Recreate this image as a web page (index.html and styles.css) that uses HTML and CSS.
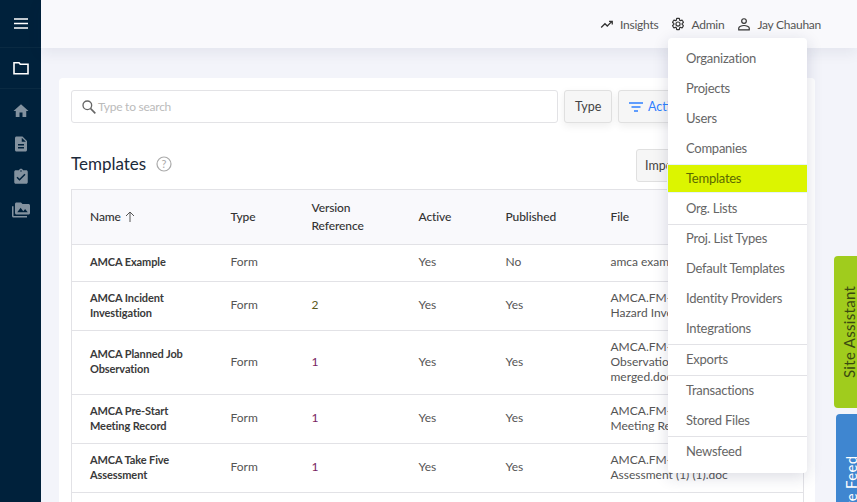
FILE: index.html
```html
<!DOCTYPE html>
<html lang="en">
<head>
<meta charset="utf-8">
<title>Templates</title>
<link rel="stylesheet" href="styles.css">
</head>
<body>
<div class="app">
  <aside class="sidebar">
    <div class="side-top">
      <svg viewBox="0 0 14 11" width="14" height="11"><path d="M0 1h14M0 5.500h14M0 10h14" stroke="#fff" stroke-width="1.500" fill="none"/></svg>
    </div>
    <div class="side-folder">
      <svg viewBox="0 0 16 14" width="16" height="14"><path d="M1 3V1.700h5l1.300 1.600H15v9.400H1z" fill="none" stroke="#fff" stroke-width="1.600"/></svg>
    </div>
    <nav class="side-nav">
      <svg viewBox="0 0 24 24" width="18" height="18"><path d="M10 20v-6h4v6h5v-8h3L12 3 2 12h3v8z" fill="#83929f"/></svg>
      <svg viewBox="0 0 24 24" width="18" height="18"><path d="M14 2H6c-1.100 0-2 .9-2 2v16c0 1.100.9 2 2 2h12c1.100 0 2-.9 2-2V8l-6-6zm2 16H8v-2h8v2zm0-4H8v-2h8v2zm-3-5V3.500L18.500 9H13z" fill="#83929f"/></svg>
      <svg viewBox="0 0 24 24" width="18" height="18"><path d="M19 3h-4.200C14.400 1.800 13.300 1 12 1s-2.400.8-2.800 2H5c-1.100 0-2 .9-2 2v14c0 1.100.9 2 2 2h14c1.100 0 2-.9 2-2V5c0-1.100-.9-2-2-2zm-7 0c.6 0 1 .4 1 1s-.4 1-1 1-1-.4-1-1 .4-1 1-1zm-2 14l-4-4 1.400-1.400L10 14.200l6.600-6.600L18 9l-8 8z" fill="#83929f"/></svg>
      <svg viewBox="0 0 24 24" width="18" height="18"><path d="M2 7H0v13c0 1.100.9 2 2 2h18v-2H2V7zm20-3h-8l-2-2H6c-1.100 0-2 .9-2 2v12c0 1.100.9 2 2 2h16c1.100 0 2-.9 2-2V6c0-1.100-.9-2-2-2zM7 15l4.500-6 3.500 4.500 2.500-3L21 15H7z" fill="#83929f"/></svg>
    </nav>
  </aside>

  <div class="main">
    <header class="topbar">
      <a class="top-link">
        <svg viewBox="0 0 24 24" width="14" height="14"><path d="M2 18l6.500-6.500 4 4L20 8M15.500 7.500H21V13" fill="none" stroke="#333" stroke-width="2.200"/></svg>
        Insights
      </a>
      <a class="top-link">
        <svg viewBox="0 0 24 24" width="14" height="14"><path d="M19.140 12.940c.04-.3.06-.61.06-.94 0-.32-.02-.64-.07-.94l2.030-1.580c.18-.14.23-.41.12-.61l-1.920-3.320c-.12-.22-.37-.29-.59-.22l-2.390.96c-.5-.38-1.030-.7-1.620-.94l-.36-2.540c-.04-.24-.24-.41-.48-.41h-3.840c-.24 0-.43.17-.47.41l-.36 2.540c-.59.24-1.130.57-1.620.94l-2.390-.96c-.22-.08-.47 0-.59.22L2.740 8.870c-.12.21-.08.47.12.61l2.030 1.580c-.05.3-.09.63-.09.94s.02.64.07.94l-2.030 1.580c-.18.14-.23.41-.12.61l1.920 3.320c.12.22.37.29.59.22l2.390-.96c.5.38 1.030.7 1.620.94l.36 2.540c.05.24.24.41.48.41h3.840c.24 0 .44-.17.47-.41l.36-2.540c.59-.24 1.130-.56 1.620-.94l2.390.96c.22.08.47 0 .59-.22l1.920-3.320c.12-.22.07-.47-.12-.61l-2.010-1.580z" fill="none" stroke="#333" stroke-width="2"/><circle cx="12" cy="12" r="3.500" fill="none" stroke="#333" stroke-width="2"/></svg>
        Admin
      </a>
      <a class="top-link">
        <svg viewBox="0 0 24 24" width="14" height="14"><circle cx="12" cy="7" r="4" fill="none" stroke="#333" stroke-width="2"/><path d="M3 22v-3c0-2.500 5-4.500 9-4.500s9 2 9 4.500v3z" fill="none" stroke="#333" stroke-width="2"/></svg>
        Jay Chauhan
      </a>
    </header>

    <section class="card">
      <div class="search-row">
        <div class="search">
          <svg viewBox="0 0 24 24" width="16" height="16"><circle cx="9.500" cy="9.500" r="6.500" fill="none" stroke="#666" stroke-width="2"/><path d="M14.500 14.500l7 7" stroke="#666" stroke-width="2.400"/></svg>
          <span>Type to search</span>
        </div>
        <button class="btn btn-type">Type</button>
        <button class="btn btn-active">
          <svg viewBox="0 0 14 10" width="14" height="10"><path d="M0 1h14M2.500 5h9M5 9h4" stroke="#2f80ff" stroke-width="1.600"/></svg>
          Active
        </button>
      </div>
      <div class="title-row">
        <h1>Templates</h1>
        <svg class="help" viewBox="0 0 16 16" width="16" height="16"><circle cx="8" cy="8" r="7" fill="none" stroke="#aaa" stroke-width="1.200"/><text x="8" y="11.500" class="help-q">?</text></svg>
        <button class="btn btn-import">Import</button>
      </div>
      <table class="grid">
        <colgroup><col class="c1"><col class="c2"><col class="c3"><col class="c4"><col class="c5"><col class="c6"></colgroup>
        <thead>
          <tr>
            <th>Name <svg class="sort" viewBox="0 0 10 11" width="10" height="11"><path d="M5 11V1M1 5l4-4 4 4" fill="none" stroke="#555" stroke-width="1"/></svg></th>
            <th>Type</th>
            <th>Version Reference</th>
            <th>Active</th>
            <th>Published</th>
            <th>File</th>
          </tr>
        </thead>
        <tbody>
          <tr class="r1"><td class="name">AMCA Example</td><td>Form</td><td></td><td>Yes</td><td>No</td><td>amca example.doc</td></tr>
          <tr class="r2"><td class="name">AMCA Incident Investigation</td><td>Form</td><td class="v2">2</td><td>Yes</td><td>Yes</td><td>AMCA.FM-01 Incident<br>Hazard Investigation.doc</td></tr>
          <tr class="r3"><td class="name">AMCA Planned Job Observation</td><td>Form</td><td class="v1">1</td><td>Yes</td><td>Yes</td><td>AMCA.FM-23 Planned Job<br>Observation Checklist<br>merged.doc</td></tr>
          <tr class="r2"><td class="name">AMCA Pre-Start Meeting Record</td><td>Form</td><td class="v1">1</td><td>Yes</td><td>Yes</td><td>AMCA.FM-46 Pre-Start<br>Meeting Record.doc</td></tr>
          <tr class="r2"><td class="name">AMCA Take Five Assessment</td><td>Form</td><td class="v1">1</td><td>Yes</td><td>Yes</td><td>AMCA.FM-51 Take Five<br>Assessment (1) (1).doc</td></tr>
          <tr class="r2"><td></td><td></td><td></td><td></td><td></td><td></td></tr>
        </tbody>
      </table>
    </section>
  </div>

  <ul class="menu">
    <li>Organization</li>
    <li>Projects</li>
    <li>Users</li>
    <li>Companies</li>
    <li class="current">Templates</li>
    <li class="sep-after tall">Org. Lists</li>
    <li class="after-first">Proj. List Types</li>
    <li>Default Templates</li>
    <li>Identity Providers</li>
    <li class="sep-after tall">Integrations</li>
    <li class="sep-after lift">Exports</li>
    <li class="lift">Transactions</li>
    <li class="sep-after lift">Stored Files</li>
    <li class="lift">Newsfeed</li>
  </ul>

  <div class="tab tab-green"><span>Site Assistant</span></div>
  <div class="tab tab-blue"><span>Live Feed</span></div>
</div>
</body>
</html>
```

FILE: styles.css
```css
* { box-sizing: border-box; }
html, body { margin: 0; height: 100%; overflow: hidden; }
body {
  font-family: "Lato", "Open Sans", sans-serif;
  font-size: 12px;
  color: #444;
  background: #f3f4fa;
}
.app { position: relative; display: flex; width: 857px; height: 502px; overflow: hidden; }

.sidebar { width: 41px; flex: none; background: #00213b; display: flex; flex-direction: column; align-items: center; }
.side-top { height: 48px; width: 100%; display: flex; align-items: center; justify-content: center; border-bottom: 1px solid #0a2a42; }
.side-folder { height: 41px; width: 100%; display: flex; align-items: center; justify-content: center; border-bottom: 1px solid #0a2a42; }
.side-nav { display: flex; flex-direction: column; align-items: center; gap: 15px; padding-top: 13px; }

.main { flex: 1; min-width: 0; display: flex; flex-direction: column; }
.topbar {
  height: 48px; flex: none; background: #f9f9fc;
  display: flex; align-items: center; justify-content: flex-end; gap: 13px;
  padding-right: 36px;
  box-shadow: 0 4px 14px rgba(30, 40, 80, .08);
  position: relative;
}
.top-link { display: flex; align-items: center; gap: 6px; font-size: 12px; color: #555; letter-spacing: -.25px; }

.card { margin: 30px 42px 0 18px; flex: 1; background: #fff; border-radius: 4px 4px 0 0; padding: 12px 12px 0; }
.search-row { display: flex; gap: 6px; height: 33px; }
.search {
  width: 487px; border: 1px solid #e3e3e6; border-radius: 3px; display: flex; align-items: center; gap: 1px;
  padding-left: 9px; color: #bbb; font-size: 12px; letter-spacing: -.25px;
}
.btn {
  height: 33px; border: 1px solid #e0e0e0; border-radius: 3px; background: #f6f6f6;
  font: inherit; color: #444; font-size: 12.500px; padding: 0 10px;
  box-shadow: 0 3px 8px rgba(0, 0, 0, .07);
}
.btn-type { width: 48px; }
.btn-active { width: 100px; display: flex; align-items: center; gap: 5px; color: #2f80ff; }
.title-row { display: flex; align-items: center; height: 33px; margin-top: 26px; }
h1 { margin: 0 0 5px; font-weight: 400; font-size: 17px; color: #1c2a3a; }
.help { margin: 0 0 3px 10px; }
.help-q { font-size: 11px; text-anchor: middle; fill: #aaa; }
.btn-import { margin-left: auto; margin-right: 77px; width: 90px; padding: 0 8px; text-align: left; box-shadow: none; }

.grid { width: 732px; border-collapse: collapse; margin-top: 7px; table-layout: fixed; font-size: 12px; border: 1px solid #e2e2e6; }
.c1 { width: 159px; } .c2 { width: 81px; } .c3 { width: 107px; } .c4 { width: 87px; } .c5 { width: 105px; } .c6 { width: 193px; }
th { height: 55px; background: #f9f9fc; font-weight: 500; text-align: left; line-height: 18px; padding: 0 18px; color: #333; border-bottom: 1px solid #e2e2e6; letter-spacing: -.1px; }
th:not(:first-child), td:not(:first-child) { padding-left: 0; padding-right: 18px; }
.sort { margin-left: 1px; vertical-align: -1px; }
td { padding: 0 18px 3px; line-height: 15px; border-bottom: 1px solid #e2e2e6; color: #555; }
td.name { font-weight: 700; color: #3a3a3a; font-size: 11px; letter-spacing: -.1px; padding-right: 30px; }
.r1 td { height: 37px; }
.r2 td { height: 49px; }
.r3 td { height: 64px; }
.v1 { color: #7a1f63; }
.v2 { color: #5d5a20; }

.menu {
  position: absolute; left: 668px; top: 38px; width: 139px; margin: 0; padding: 5px 0 0; height: 435px;
  list-style: none; background: #fff; border-radius: 4px;
  box-shadow: 0 4px 16px rgba(30, 40, 80, .16);
  font-size: 13px; color: #666; letter-spacing: -.25px;
}
.menu li { height: 30px; line-height: 30px; padding-left: 18px; }
.menu .current { background: #dcf500; height: 27px; line-height: 27px; margin: 2px 0 1px; color: #5b6a00; box-shadow: 0 0 0 1px #e4f3fb; }
.menu .sep-after { border-bottom: 1px solid #e2e2e6; height: 31px; }
.menu .tall { height: 32px; }
.menu .after-first { height: 28px; line-height: 27px; }
.menu .lift { line-height: 28px; }

.tab {
  position: absolute; display: flex; align-items: center; justify-content: center;
  writing-mode: vertical-rl; transform: rotate(180deg);
  font-size: 15px; letter-spacing: .3px;
}
.tab-green { left: 834px; top: 256px; width: 30px; height: 152px; background: #a0cc1d; color: #3a4a10; border-radius: 0 4px 4px 0; }
.tab-blue { left: 836px; top: 414px; width: 30px; height: 152px; background: #3f86d0; color: #fff; border-radius: 0 4px 4px 0; justify-content: flex-end; padding-bottom: 42px; }
```
